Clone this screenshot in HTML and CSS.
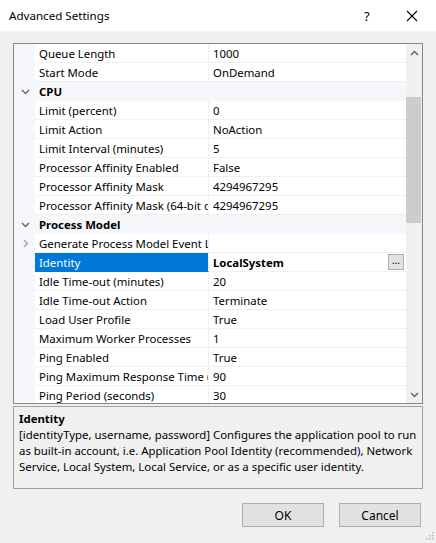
FILE: index.html
```html
<!DOCTYPE html>
<html>
<head>
<meta charset="utf-8">
<link rel="stylesheet" href="styles.css">
</head>
<body>
<div class="dialog">
  <div class="titlebar">
    <span class="title">Advanced Settings</span>
    <span class="help">?</span>
    <svg class="close" width="12" height="12" viewBox="0 0 12 12"><path d="M1 1 L11 11 M11 1 L1 11" stroke="#000" stroke-width="1.1" fill="none"/></svg>
  </div>
  <div class="content">
    <div class="grid">
      <div class="rows">
        <div class="row"><div class="gut"></div><div class="name">Queue Length</div><div class="val">1000</div></div>
        <div class="row"><div class="gut"></div><div class="name">Start Mode</div><div class="val">OnDemand</div></div>
        <div class="row cat"><div class="gut"><svg width="9" height="6" viewBox="0 0 9 6"><path d="M1 1 L4.5 4.5 L8 1" stroke="#606060" stroke-width="1.3" fill="none"/></svg></div><div class="catname">CPU</div></div>
        <div class="row"><div class="gut"></div><div class="name">Limit (percent)</div><div class="val">0</div></div>
        <div class="row"><div class="gut"></div><div class="name">Limit Action</div><div class="val">NoAction</div></div>
        <div class="row"><div class="gut"></div><div class="name">Limit Interval (minutes)</div><div class="val">5</div></div>
        <div class="row"><div class="gut"></div><div class="name">Processor Affinity Enabled</div><div class="val">False</div></div>
        <div class="row"><div class="gut"></div><div class="name">Processor Affinity Mask</div><div class="val">4294967295</div></div>
        <div class="row"><div class="gut"></div><div class="name">Processor Affinity Mask (64-bit option)</div><div class="val">4294967295</div></div>
        <div class="row cat"><div class="gut"><svg width="9" height="6" viewBox="0 0 9 6"><path d="M1 1 L4.5 4.5 L8 1" stroke="#606060" stroke-width="1.3" fill="none"/></svg></div><div class="catname">Process Model</div></div>
        <div class="row"><div class="gut"><svg width="6" height="9" viewBox="0 0 6 9"><path d="M1 1 L4.5 4.5 L1 8" stroke="#a0a0a0" stroke-width="1.3" fill="none"/></svg></div><div class="name">Generate Process Model Event Log Entry</div><div class="val"></div></div>
        <div class="row"><div class="gut"></div><div class="name sel">Identity</div><div class="val bold">LocalSystem<span class="ell">...</span></div></div>
        <div class="row"><div class="gut"></div><div class="name">Idle Time-out (minutes)</div><div class="val">20</div></div>
        <div class="row"><div class="gut"></div><div class="name">Idle Time-out Action</div><div class="val">Terminate</div></div>
        <div class="row"><div class="gut"></div><div class="name">Load User Profile</div><div class="val">True</div></div>
        <div class="row"><div class="gut"></div><div class="name">Maximum Worker Processes</div><div class="val">1</div></div>
        <div class="row"><div class="gut"></div><div class="name">Ping Enabled</div><div class="val">True</div></div>
        <div class="row"><div class="gut"></div><div class="name">Ping Maximum Response Time (seconds)</div><div class="val">90</div></div>
        <div class="row"><div class="gut"></div><div class="name">Ping Period (seconds)</div><div class="val">30</div></div>
      </div>
      <div class="scrollbar">
        <div class="arrow"><svg width="9" height="6" viewBox="0 0 9 6"><path d="M1 5 L4.5 1.5 L8 5" stroke="#606060" stroke-width="1.3" fill="none"/></svg></div>
        <div class="track"><div class="thumb"></div></div>
        <div class="arrow"><svg width="9" height="6" viewBox="0 0 9 6"><path d="M1 1 L4.5 4.5 L8 1" stroke="#606060" stroke-width="1.3" fill="none"/></svg></div>
      </div>
    </div>
    <div class="desc">
      <div class="desc-title">Identity</div>
      <div class="desc-text">[identityType, username, password] Configures the application pool to run<br>as built-in account, i.e. Application Pool Identity (recommended), Network<br>Service, Local System, Local Service, or as a specific user identity.</div>
    </div>
    <div class="buttons">
      <button class="btn">OK</button>
      <button class="btn">Cancel</button>
    </div>
  </div>
  <svg class="grip" width="8" height="8" viewBox="0 0 8 8"><g fill="#b8b8b8"><rect x="6" y="0" width="1.5" height="1.5"/><rect x="3" y="3" width="1.5" height="1.5"/><rect x="6" y="3" width="1.5" height="1.5"/><rect x="0" y="6" width="1.5" height="1.5"/><rect x="3" y="6" width="1.5" height="1.5"/><rect x="6" y="6" width="1.5" height="1.5"/></g></svg>
</div>
</body>
</html>
```
FILE: styles.css
```css
* { box-sizing: border-box; }
html, body { margin: 0; padding: 0; }
body {
  width: 436px;
  height: 543px;
  background: #f0f0f0;
  font-family: "Noto Sans", "Open Sans", sans-serif;
  font-size: 11.4px;
  color: #000;
  overflow: hidden;
}
.dialog {
  position: relative;
  width: 436px;
  height: 543px;
  display: flex;
  flex-direction: column;
}
.titlebar {
  height: 31px;
  background: #fff;
  display: flex;
  align-items: center;
  padding-left: 9px;
}
.title { flex: 1; font-size: 11.6px; }
.help { width: 14px; margin-right: 28px; font-size: 13px; }
.close { margin-right: 18px; }
.content {
  padding: 12px 13px 0 13px;
  display: flex;
  flex-direction: column;
}
.grid {
  height: 361px;
  border: 1px solid #828790;
  background: #fff;
  display: flex;
  overflow: hidden;
}
.rows {
  flex: 1;
  display: flex;
  flex-direction: column;
  overflow: hidden;
}
.row {
  flex: 0 0 19px;
  height: 19px;
  display: flex;
  align-items: stretch;
  line-height: 19px;
}
.gut {
  width: 21px;
  flex: 0 0 21px;
  background: #f5f7fa;
  display: flex;
  align-items: center;
  justify-content: center;
  padding-left: 2px;
}
.name {
  width: 174px;
  flex: 0 0 174px;
  padding-left: 4px;
  white-space: nowrap;
  overflow: hidden;
  border-bottom: 1px solid #f0f0f0;
  border-right: 1px solid #f0f0f0;
}
.name.sel { background: #0078d7; color: #fff; border-bottom-color: #0078d7; }
.val {
  flex: 1;
  padding-left: 4px;
  white-space: nowrap;
  overflow: hidden;
  border-bottom: 1px solid #f0f0f0;
  display: flex;
  align-items: center;
}
.val.bold { font-weight: bold; }
.ell {
  margin-left: auto;
  margin-right: 2px;
  width: 16px;
  height: 16px;
  background: #e1e1e1;
  border: 1px solid #adadad;
  font-weight: normal;
  font-size: 10px;
  line-height: 10px;
  text-align: center;
}
.row.cat { background: #f5f7fa; }
.catname {
  flex: 1;
  padding-left: 4px;
  font-weight: bold;
}
.scrollbar {
  width: 16px;
  flex: 0 0 16px;
  background: #f0f0f0;
  display: flex;
  flex-direction: column;
}
.arrow {
  height: 17px;
  flex: 0 0 17px;
  display: flex;
  align-items: center;
  justify-content: center;
}
.track { flex: 1; padding-top: 36px; }
.thumb {
  width: 15px;
  height: 126px;
  background: #cdcdcd;
}
.desc {
  margin-top: 2px;
  height: 83px;
  border: 1px solid #a0a0a0;
  padding: 3px 5px;
}
.desc-title { font-weight: bold; line-height: 17px; }
.desc-text { line-height: 16px; white-space: nowrap; }
.buttons {
  margin-top: 14px;
  display: flex;
  justify-content: flex-end;
  gap: 15px;
  padding-right: 2px;
}
.btn {
  width: 82px;
  height: 24px;
  background: #e1e1e1;
  border: 1px solid #adadad;
  font-family: inherit;
  font-size: 12px;
  color: #000;
  padding: 0;
}
.grip { position: absolute; right: 2px; bottom: 3px; }
```
